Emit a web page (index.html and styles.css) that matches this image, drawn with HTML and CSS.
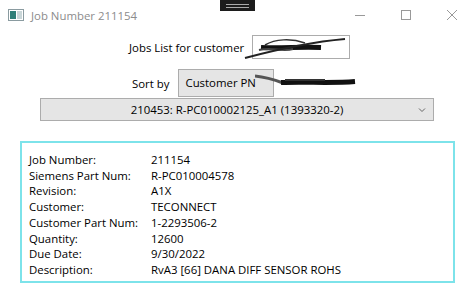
FILE: index.html
```html
<!DOCTYPE html>
<html>
<head>
    <link rel="stylesheet" href="styles.css">
</head>
<body>
    <div class="window">
        <div class="titlebar">
            <svg class="app-icon" width="16" height="12" viewBox="0 0 16 12">
                <rect x="0.5" y="0.5" width="15" height="11" fill="#fff" stroke="#8a9ba0"/>
                <rect x="2" y="2" width="6" height="8" fill="#2f7f78"/>
                <rect x="9" y="2" width="5" height="8" fill="#c9d6d8"/>
            </svg>
            <span class="title">Job Number 211154</span>
            <div class="tab"><span></span></div>
            <div class="controls">
                <svg width="12" height="12" viewBox="0 0 12 12"><path d="M1 6.5h10" stroke="#999" stroke-width="1"/></svg>
                <svg width="12" height="12" viewBox="0 0 12 12"><rect x="1.5" y="1.5" width="9" height="9" fill="none" stroke="#999"/></svg>
                <svg width="12" height="12" viewBox="0 0 12 12"><path d="M1 1l10 10M11 1L1 11" stroke="#999"/></svg>
            </div>
        </div>

        <div class="content">
            <div class="row customer-row">
                <label>Jobs List for customer</label>
                <div class="textbox">
                    <svg class="scribble" width="104" height="24" viewBox="0 0 104 24">
                        <path d="M22 9c10-6 26-7 40-2" stroke="#333" stroke-width="1.5" fill="none"/>
                        <path d="M18 11.5c20 1 40-1 60 0" stroke="#111" stroke-width="5" fill="none"/>
                        <path d="M16 14c12-3 24 2 34-1" stroke="#444" stroke-width="2" fill="none"/>
                        <path d="M2 22c30-8 66-16 100-19" stroke="#222" stroke-width="2" fill="none"/>
                    </svg>
                </div>
            </div>

            <div class="row sort-row">
                <label>Sort by</label>
                <div class="combo small-combo">Customer PN</div>
                <svg class="scribble-2" width="120" height="20" viewBox="0 0 120 20">
                    <path d="M0 4c10 1 20 4 28 7" stroke="#555" stroke-width="3" fill="none"/>
                    <path d="M26 10.5c25-1 50 1 74-1" stroke="#111" stroke-width="5" fill="none"/>
                    <path d="M30 8h40" stroke="#333" stroke-width="2" fill="none"/>
                </svg>
            </div>

            <div class="combo wide-combo">
                <span>210453: R-PC010002125_A1 (1393320-2)</span>
                <svg class="chevron" width="8" height="6" viewBox="0 0 8 6"><path d="M1 1.5l3 3 3-3" stroke="#666" fill="none"/></svg>
            </div>

            <div class="details">
                <div class="detail"><span class="key">Job Number:</span><span>211154</span></div>
                <div class="detail"><span class="key">Siemens Part Num:</span><span>R-PC010004578</span></div>
                <div class="detail"><span class="key">Revision:</span><span>A1X</span></div>
                <div class="detail"><span class="key">Customer:</span><span>TECONNECT</span></div>
                <div class="detail"><span class="key">Customer Part Num:</span><span>1-2293506-2</span></div>
                <div class="detail"><span class="key">Quantity:</span><span>12600</span></div>
                <div class="detail"><span class="key">Due Date:</span><span>9/30/2022</span></div>
                <div class="detail"><span class="key">Description:</span><span>RvA3 [66] DANA DIFF SENSOR ROHS</span></div>
            </div>
        </div>
    </div>
</body>
</html>
```
FILE: styles.css
```css
body {
    margin: 0;
    background: #fff;
    font-family: "Open Sans", "Noto Sans", sans-serif;
    font-size: 11.4px;
    color: #000;
}
.window {
    width: 474px;
    height: 293px;
    overflow: hidden;
}
.titlebar {
    position: relative;
    height: 30px;
    display: flex;
    align-items: center;
    padding-left: 8px;
}
.app-icon {
    margin-right: 7px;
}
.title {
    color: #8c8c8c;
    font-size: 11.4px;
}
.tab {
    position: absolute;
    left: 220px;
    top: 0;
    width: 35px;
    height: 11px;
    background: #1c1c1c;
    display: flex;
    align-items: center;
    justify-content: center;
}
.tab span {
    width: 23px;
    height: 2px;
    border-top: 1px solid #aaa;
    border-bottom: 1px solid #aaa;
}
.controls {
    margin-left: auto;
    display: flex;
    gap: 34px;
    padding-right: 16px;
}
.content {
    padding: 5px 0 0 20px;
}
.row {
    display: flex;
    align-items: center;
}
.customer-row {
    padding-left: 109px;
    height: 24px;
}
.customer-row label {
    margin-right: 8px;
}
.textbox {
    width: 96px;
    height: 22px;
    border: 1px solid #acacac;
    position: relative;
}
.scribble {
    position: absolute;
    left: -10px;
    top: 0;
}
.sort-row {
    margin-top: 10px;
    padding-left: 112px;
    position: relative;
}
.sort-row label {
    margin-right: 9px;
}
.combo {
    background: #e5e5e5;
    border: 1px solid #acacac;
    box-sizing: border-box;
}
.small-combo {
    width: 96px;
    height: 28px;
    line-height: 26px;
    padding-left: 6px;
}
.scribble-2 {
    position: absolute;
    left: 235px;
    top: 3px;
}
.wide-combo {
    margin: 1px 0 0 20px;
    width: 394px;
    height: 23px;
    display: flex;
    align-items: center;
    justify-content: center;
    position: relative;
}
.chevron {
    position: absolute;
    right: 7px;
    top: 8px;
}
.details {
    margin-top: 20px;
    width: 435px;
    height: 142px;
    box-sizing: border-box;
    border: 2px solid #7de3ea;
    padding: 9px 0 0 7px;
}
.detail {
    display: flex;
    line-height: 15.7px;
}
.key {
    width: 122px;
}
```
